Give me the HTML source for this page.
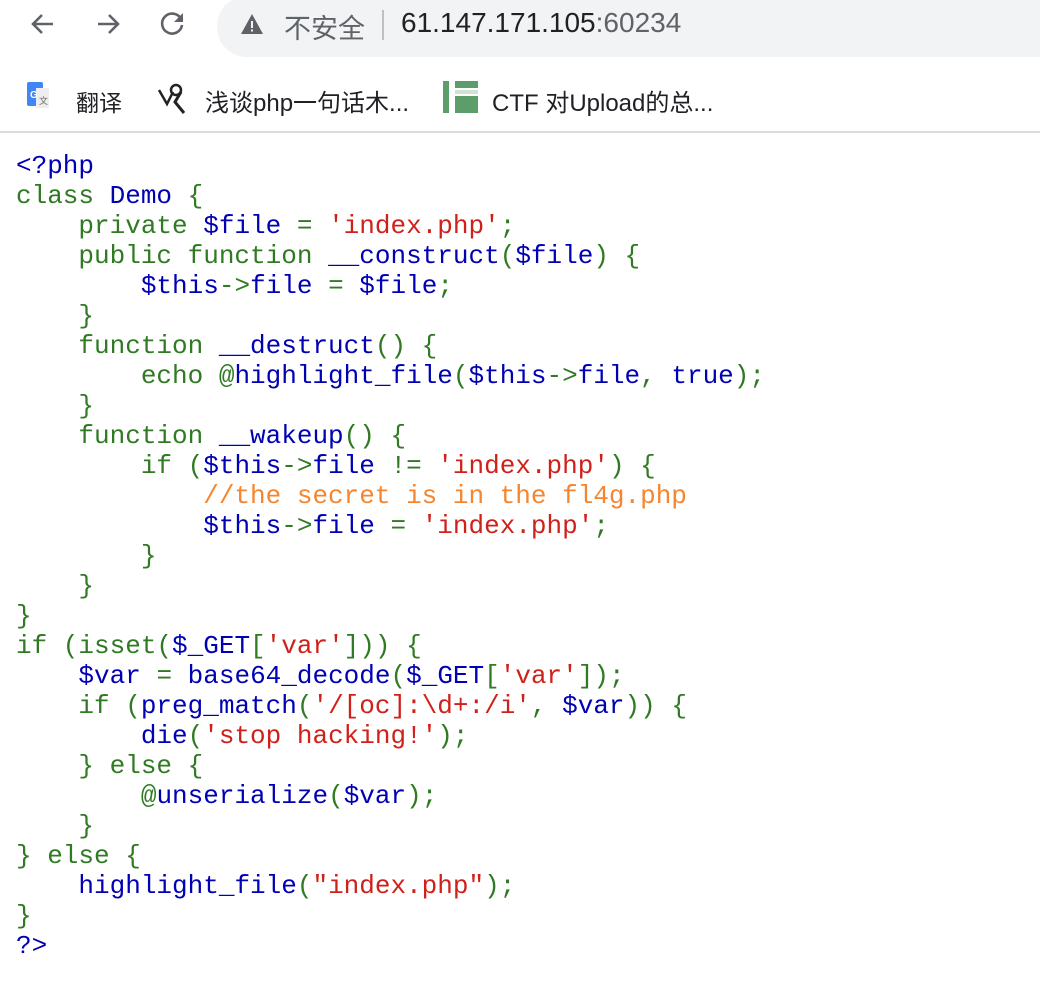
<!DOCTYPE html>
<html><head><meta charset="utf-8"><style>
body{margin:0;width:1040px;height:1006px;background:#fff;overflow:hidden;position:relative;font-family:"Liberation Sans","Noto Sans CJK SC",sans-serif}
.top{position:absolute;left:0;top:0;width:1040px;height:131px;background:#fff;border-bottom:2px solid #dadce0}
.pill{position:absolute;left:217px;top:-4px;width:900px;height:61px;background:#f1f3f4;border-radius:30px}
.t{position:absolute;white-space:nowrap}
pre{position:absolute;left:16px;top:151px;margin:0;font-family:"Liberation Mono",monospace;font-size:26px;line-height:30px;color:#2f7a22}
.d{color:#0000b4}.s{color:#d0201a}.c{color:#f5852e}
</style></head><body>
<div class="top">
<svg class="t" style="left:28px;top:9px" width="30" height="30" viewBox="0 0 30 30"><path d="M25 15H6M14 6l-9 9 9 9" stroke="#5f6368" stroke-width="2.6" fill="none"/></svg>
<svg class="t" style="left:93px;top:9px" width="30" height="30" viewBox="0 0 30 30"><path d="M5 15h19M16 6l9 9-9 9" stroke="#5f6368" stroke-width="2.6" fill="none"/></svg>
<svg class="t" style="left:157px;top:8px" width="30" height="30" viewBox="0 0 30 30"><path d="M24 11A10 10 0 1 0 25 17" stroke="#5f6368" stroke-width="2.6" fill="none"/><path d="M26 5v9h-9z" fill="#5f6368"/></svg>
<div class="pill"></div>
<svg class="t" style="left:240px;top:12px" width="24" height="24" viewBox="0 0 24 24"><path d="M12 2L23 22H1z" fill="#5f6368"/><rect x="11" y="9" width="2" height="7" fill="#f1f3f4"/><rect x="11" y="17.5" width="2" height="2" fill="#f1f3f4"/></svg>
<div class="t" style="left:284px;top:7px;font-size:27px;color:#5f6368">不安全</div>
<div class="t" style="left:382px;top:10px;width:2px;height:30px;background:#bdc1c6"></div>
<div class="t" style="left:401px;top:7px;font-size:28px;color:#202124">61.147.171.105<span style="color:#5f6368">:60234</span></div>
<svg class="t" style="left:27px;top:82px" width="24" height="30" viewBox="0 0 24 30"><rect x="0" y="0" width="16" height="24" rx="2" fill="#4285f4"/><rect x="9" y="6" width="13" height="20" fill="#eee"/><text x="3" y="16" font-size="10" fill="#fff" font-family="Liberation Sans" font-weight="bold">G</text><text x="12" y="22" font-size="9" fill="#666" font-family="Noto Sans CJK SC">文</text></svg>
<div class="t" style="left:76px;top:84px;font-size:23px;color:#202124">翻译</div>
<svg class="t" style="left:157px;top:82px" width="30" height="32" viewBox="0 0 30 32"><path d="M2 8l8 14 6-12" stroke="#222" stroke-width="2.5" fill="none"/><circle cx="19" cy="8" r="5" stroke="#222" stroke-width="2.5" fill="none"/><path d="M24 10l-6 10 9 11" stroke="#222" stroke-width="3" fill="none"/></svg>
<div class="t" style="left:205px;top:83px;font-size:24px;color:#202124">浅谈php一句话木...</div>
<svg class="t" style="left:443px;top:81px" width="36" height="34" viewBox="0 0 36 34"><rect x="0" y="0" width="6" height="32" fill="#5c9e6a"/><rect x="12" y="0" width="23" height="7" fill="#5c9e6a"/><rect x="12" y="9" width="23" height="4" fill="#cfe3d3"/><rect x="12" y="15" width="23" height="17" fill="#5c9e6a"/></svg>
<div class="t" style="left:492px;top:83px;font-size:24px;color:#202124">CTF 对Upload的总...</div>
</div>
<pre><span class="d">&lt;?php</span>
class <span class="d">Demo</span> {
    private <span class="d">$file</span> = <span class="s">'index.php'</span>;
    public function <span class="d">__construct</span>(<span class="d">$file</span>) {
        <span class="d">$this</span>-&gt;<span class="d">file</span> = <span class="d">$file</span>;
    }
    function <span class="d">__destruct</span>() {
        echo @<span class="d">highlight_file</span>(<span class="d">$this</span>-&gt;<span class="d">file</span>, <span class="d">true</span>);
    }
    function <span class="d">__wakeup</span>() {
        if (<span class="d">$this</span>-&gt;<span class="d">file</span> != <span class="s">'index.php'</span>) {
            <span class="c">//the secret is in the fl4g.php</span>
            <span class="d">$this</span>-&gt;<span class="d">file</span> = <span class="s">'index.php'</span>;
        }
    }
}
if (isset(<span class="d">$_GET</span>[<span class="s">'var'</span>])) {
    <span class="d">$var</span> = <span class="d">base64_decode</span>(<span class="d">$_GET</span>[<span class="s">'var'</span>]);
    if (<span class="d">preg_match</span>(<span class="s">'/[oc]:\d+:/i'</span>, <span class="d">$var</span>)) {
        <span class="d">die</span>(<span class="s">'stop hacking!'</span>);
    } else {
        @<span class="d">unserialize</span>(<span class="d">$var</span>);
    }
} else {
    <span class="d">highlight_file</span>(<span class="s">"index.php"</span>);
}
<span class="d">?&gt;</span></pre>
</body></html>
